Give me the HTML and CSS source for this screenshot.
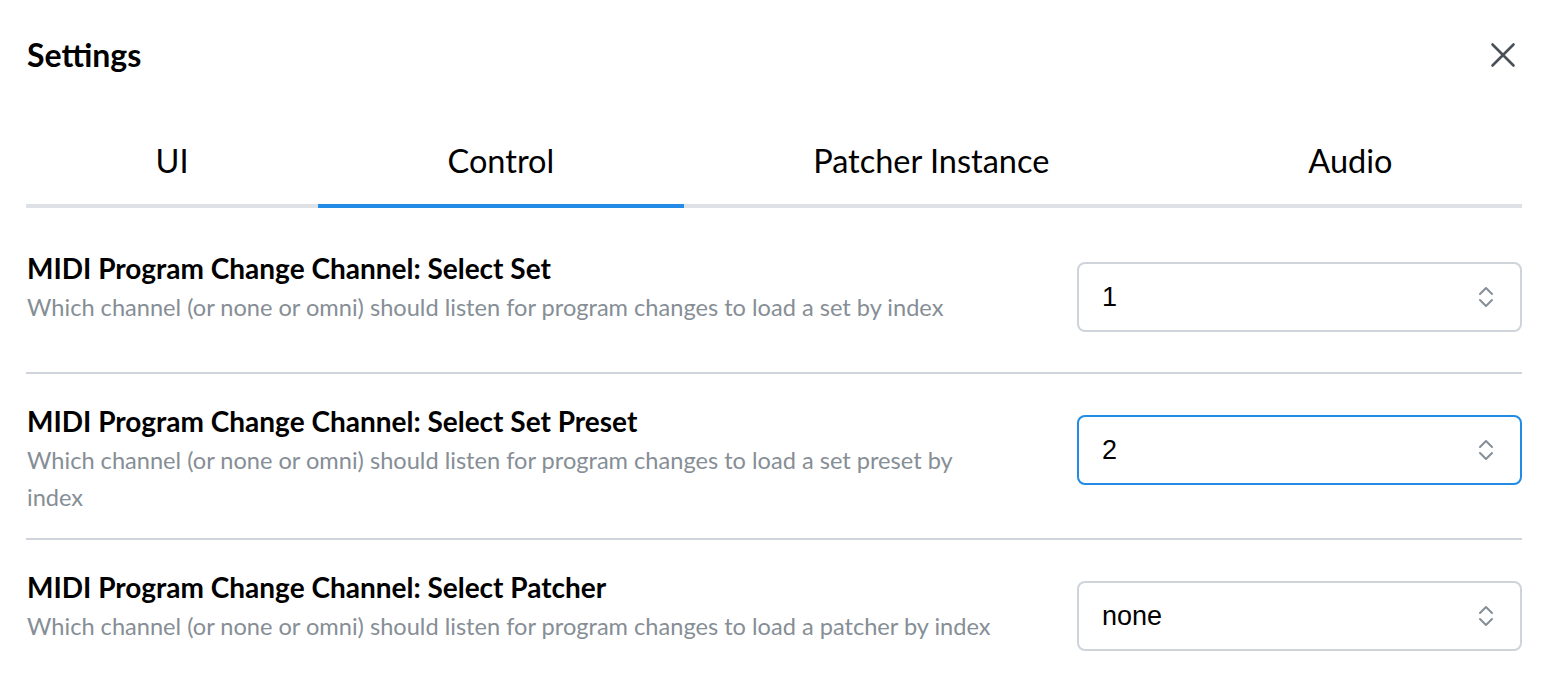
FILE: index.html
```html
<!DOCTYPE html>
<html lang="en">
<head>
<meta charset="utf-8">
<title>Settings</title>
<link rel="stylesheet" href="styles.css">
</head>
<body>
<div class="modal">
  <header class="modal-header">
    <h2 class="modal-title">Settings</h2>
    <button class="close-btn" aria-label="Close">
      <svg width="26" height="26" viewBox="0 0 26 26" fill="none" stroke="#495057" stroke-width="2.6" stroke-linecap="round">
        <path d="M2.5 2.5 L23.5 23.5 M23.5 2.5 L2.5 23.5"/>
      </svg>
    </button>
  </header>
  <nav class="tabs">
    <div class="tab">UI</div>
    <div class="tab active">Control</div>
    <div class="tab">Patcher Instance</div>
    <div class="tab">Audio</div>
  </nav>
  <section class="panel">
    <div class="row">
      <div class="row-text">
        <div class="row-title">MIDI Program Change Channel: Select Set</div>
        <div class="row-desc">Which channel (or none or omni) should listen for program changes to load a set by index</div>
      </div>
      <div class="select">
        <span class="select-value">1</span>
        <svg class="chev" width="16" height="24" viewBox="0 0 16 24" fill="none" stroke="#868e96" stroke-width="2" stroke-linecap="round" stroke-linejoin="round"><path d="M2 9 L8 3 L14 9 M2 15 L8 21 L14 15"/></svg>
      </div>
    </div>
    <div class="row">
      <div class="row-text">
        <div class="row-title">MIDI Program Change Channel: Select Set Preset</div>
        <div class="row-desc">Which channel (or none or omni) should listen for program changes to load a set preset by index</div>
      </div>
      <div class="select focused">
        <span class="select-value">2</span>
        <svg class="chev" width="16" height="24" viewBox="0 0 16 24" fill="none" stroke="#868e96" stroke-width="2" stroke-linecap="round" stroke-linejoin="round"><path d="M2 9 L8 3 L14 9 M2 15 L8 21 L14 15"/></svg>
      </div>
    </div>
    <div class="row">
      <div class="row-text">
        <div class="row-title">MIDI Program Change Channel: Select Patcher</div>
        <div class="row-desc">Which channel (or none or omni) should listen for program changes to load a patcher by index</div>
      </div>
      <div class="select">
        <span class="select-value">none</span>
        <svg class="chev" width="16" height="24" viewBox="0 0 16 24" fill="none" stroke="#868e96" stroke-width="2" stroke-linecap="round" stroke-linejoin="round"><path d="M2 9 L8 3 L14 9 M2 15 L8 21 L14 15"/></svg>
      </div>
    </div>
  </section>
</div>
</body>
</html>
```

FILE: styles.css
```css
* { box-sizing: border-box; }
html, body { margin: 0; padding: 0; background: #fff; }
body {
  font-family: Lato, "Noto Sans", sans-serif;
  color: #000;
  overflow: hidden;
}
.modal {
  padding: 0 22px 0 26px;
}
.modal-header {
  height: 110px;
  display: flex;
  align-items: center;
  justify-content: space-between;
}
.modal-title {
  margin: 0;
  font-size: 32px;
  font-weight: 700;
  line-height: 1.2;
  padding-left: 1px;
}
.close-btn {
  background: none;
  border: 0;
  padding: 0;
  margin-right: 6px;
  width: 26px;
  height: 26px;
  display: flex;
  align-items: center;
  justify-content: center;
}
.tabs {
  display: flex;
  margin-top: 6px;
}
.tab {
  flex: 1 1 auto;
  height: 92px;
  display: flex;
  align-items: center;
  justify-content: center;
  font-size: 32.5px;
  border-bottom: 4px solid #dee2e6;
  white-space: nowrap;
}
.tab.active { border-bottom-color: #228be6; }
.panel { padding-top: 13px; }
.row {
  display: flex;
  align-items: flex-start;
  padding: 26px 0 22px;
  border-bottom: 2px solid #ced4da;
}
.row:last-child { border-bottom: 0; }
.row-text { flex: 0 1 975px; padding-left: 1px; }
.row-title {
  font-size: 28px;
  font-weight: 700;
  line-height: 42px;
}
.row-desc {
  font-size: 23.6px;
  line-height: 37px;
  color: #868e96;
}
.select {
  flex: 0 0 445px;
  height: 70px;
  margin: 15px 0 18px auto;
  border: 2px solid #ced4da;
  border-radius: 8px;
  display: flex;
  align-items: center;
  justify-content: space-between;
  padding: 0 26px 0 23px;
}
.select.focused { border-color: #228be6; }
.select-value {
  font-family: "Liberation Sans", Arial, sans-serif;
  font-size: 27px;
}
.chev { display: block; }
```
